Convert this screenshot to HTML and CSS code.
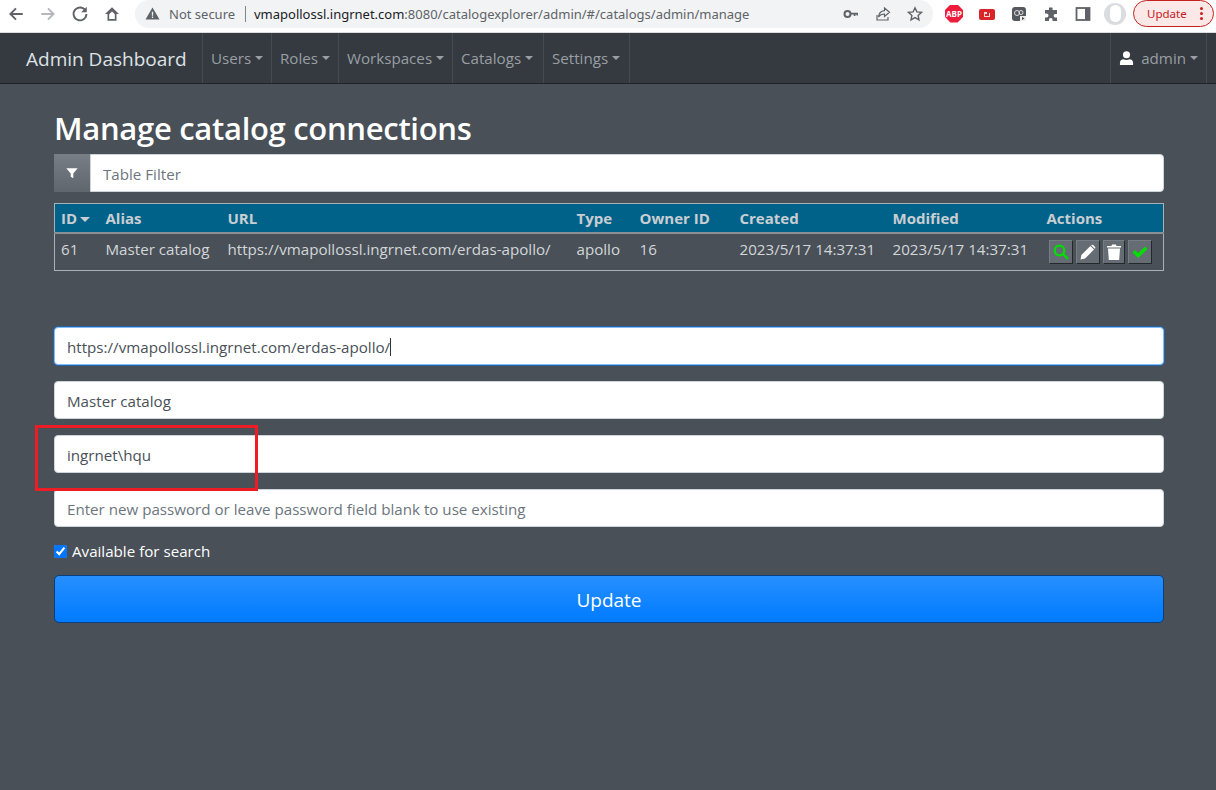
FILE: index.html
```html
<!DOCTYPE html>
<html lang="en">
<head>
<meta charset="utf-8">
<title>Manage catalog connections</title>
<link rel="stylesheet" href="styles.css">
</head>
<body>
<header class="chrome">
  <div class="chrome-nav">
    <svg class="ci" viewBox="0 0 16 16"><path d="M14 8H3M8 3L3 8l5 5" fill="none" stroke="#5f6368" stroke-width="1.7"/></svg>
    <svg class="ci" viewBox="0 0 16 16"><path d="M2 8h11M8 3l5 5-5 5" fill="none" stroke="#b4b7bb" stroke-width="1.7"/></svg>
    <svg class="ci" viewBox="0 0 16 16"><path d="M13 5.2A5.7 5.7 0 1 0 13.7 8" fill="none" stroke="#5f6368" stroke-width="1.7"/><path d="M14 1.5v5h-5z" fill="#5f6368"/></svg>
    <svg class="ci" viewBox="0 0 16 16"><path d="M8 2L1.8 8H4v6h8V8h2.2zM5.5 8.2L8 5.8l2.5 2.4v4.3h-5z" fill="#5f6368" fill-rule="evenodd"/></svg>
  </div>
  <div class="omnibox">
    <svg class="warn" viewBox="0 0 16 16"><path d="M8 1.5L15.5 14.500H.5z" fill="#5f6368"/><path d="M7.300 6h1.400v4.500H7.300zM7.300 11.300h1.400v1.400H7.300z" fill="#f1f3f4"/></svg>
    <span class="notsecure">Not secure</span>
    <span class="omni-sep"></span>
    <span class="url"><b>vmapollossl.ingrnet.com</b>:8080/catalogexplorer/admin/#/catalogs/admin/manage</span>
    <span class="omni-icons">
      <svg class="oi" viewBox="0 0 16 16"><circle cx="4.500" cy="8" r="3" fill="none" stroke="#5f6368" stroke-width="2"/><path d="M7.500 6.800H15v2.600h-1.500V8.600h-1v1.500h-1.800V8.600H7.500z" fill="#5f6368"/></svg>
      <svg class="oi" viewBox="0 0 16 16"><path d="M2 9v5h11v-3" fill="none" stroke="#5f6368" stroke-width="1.200"/><path d="M9.500 2l5 4.200-5 4.200V8C6.500 8 4.800 9 3.500 11c.3-3.500 2.500-6 6-6.400z" fill="none" stroke="#5f6368" stroke-width="1.200"/></svg>
      <svg class="oi" viewBox="0 0 16 16"><path d="M8 1.800l1.900 4.100 4.500.5-3.300 3 .9 4.400L8 11.600l-4 2.200.9-4.400-3.300-3 4.500-.5z" fill="none" stroke="#5f6368" stroke-width="1.400"/></svg>
    </span>
  </div>
  <div class="ext">
    <span class="abp">ABP</span>
    <svg class="ei" viewBox="0 0 16 16"><rect x="0" y="3" width="16" height="11" rx="2" fill="#d9252a"/><path d="M5 6h3v2H6v2h4V7h1v4H5z" fill="#f6d5d5"/></svg>
    <svg class="ei" viewBox="0 0 16 16"><rect x="1" y="1" width="14" height="14" rx="3" fill="#55585c"/><circle cx="6" cy="7" r="2.500" fill="none" stroke="#ddd"/><circle cx="10" cy="6.500" r="2" fill="none" stroke="#ddd"/><rect x="9" y="10" width="6" height="5" fill="#eee"/><path d="M11 11l2.500 1.500L11 14z" fill="#444"/></svg>
    <svg class="ei" viewBox="0 0 16 16"><path d="M6 1.500h3.500V4H14v4h-2.200a1.900 1.900 0 0 0 0 3.500H14V15H9.500v-1.800a1.900 1.900 0 0 0-3.500 0V15H2v-3.500h1.500a2 2 0 0 0 0-4H2V4h4z" fill="#5f6368"/></svg>
    <svg class="ei" viewBox="0 0 16 16"><rect x="1.500" y="2" width="13" height="12" fill="none" stroke="#5f6368" stroke-width="1.800"/><rect x="10" y="2" width="5" height="12" fill="#5f6368"/></svg>
    <span class="avatar"><span class="avatar-in"></span></span>
    <span class="update-pill">Update<span class="dots"><i></i><i></i><i></i></span></span>
  </div>
</header>

<nav class="topnav">
  <a class="brand">Admin Dashboard</a>
  <ul class="menu">
    <li class="caret">Users</li>
    <li class="caret">Roles</li>
    <li class="caret">Workspaces</li>
    <li class="caret">Catalogs</li>
    <li class="caret">Settings</li>
  </ul>
  <div class="usermenu caret">
    <svg class="user" viewBox="0 0 16 16"><circle cx="8" cy="4" r="3.800" fill="#fff"/><path d="M1 15v-2.500C1 10 3 8.800 4.800 8.800c1 .5 2 .8 3.200.8s2.200-.3 3.200-.8c1.800 0 3.800 1.200 3.800 3.700V15z" fill="#fff"/></svg>
    admin
  </div>
</nav>

<main class="content">
  <h1 class="title">Manage catalog connections</h1>
  <div class="filter">
    <span class="filter-addon"><svg viewBox="0 0 16 16"><path d="M1.500 2.500h13L9.500 8.500V14l-3-1.800V8.500z" fill="#fff"/></svg></span>
    <input class="field filter-input" placeholder="Table Filter">
  </div>
  <table class="grid">
    <colgroup>
      <col class="c-id"><col class="c-alias"><col class="c-url"><col class="c-type"><col class="c-owner"><col class="c-created"><col class="c-mod"><col class="c-act">
    </colgroup>
    <thead>
      <tr><th><span class="sort">ID</span></th><th>Alias</th><th>URL</th><th>Type</th><th>Owner ID</th><th>Created</th><th>Modified</th><th>Actions</th></tr>
    </thead>
    <tbody>
      <tr>
        <td>61</td><td>Master catalog</td><td>https://vmapollossl.ingrnet.com/erdas-apollo/</td><td>apollo</td><td>16</td><td>2023/5/17 14:37:31</td><td>2023/5/17 14:37:31</td>
        <td class="acts">
          <button class="act"><svg viewBox="0 0 16 16"><circle cx="6.500" cy="6.500" r="4.800" fill="none" stroke="#00e000" stroke-width="2.200"/><path d="M10 10l5 5" stroke="#00e000" stroke-width="2.400"/></svg></button>
          <button class="act"><svg viewBox="0 0 16 16"><path d="M.5 15.500l.9-4.600L10.400 2l3.600 3.600-9 9zM11.400 1.100a1.300 1.300 0 0 1 1.800 0l1.700 1.700a1.300 1.300 0 0 1 0 1.800l-.2.200-3.600-3.500z" fill="#fff"/></svg></button>
          <button class="act act-narrow"><svg viewBox="0 0 16 16"><path d="M1 2h4.500L6 .5h4L10.500 2H15v1.500H1zM2 4.500h12l-.8 11.500H2.800z" fill="#fff"/></svg></button>
          <button class="act"><svg viewBox="0 0 16 16"><path d="M.5 8.500l2.500-2.500 3.200 3.200L13 2.500l2.500 2.500-9.300 9z" fill="#00e000"/></svg></button>
        </td>
      </tr>
    </tbody>
  </table>

  <form class="form">
    <div class="caret-wrap">
      <input class="field focused" value="https://vmapollossl.ingrnet.com/erdas-apollo/">
      <span class="text-cursor"></span>
    </div>
    <input class="field" value="Master catalog">
    <input class="field" value="ingrnet\hqu">
    <input class="field" placeholder="Enter new password or leave password field blank to use existing">
    <label class="check"><input type="checkbox" checked>Available for search</label>
    <button type="button" class="submit">Update</button>
  </form>
  <div class="highlight"></div>
</main>
</body>
</html>
```
FILE: styles.css
```css
* { box-sizing: border-box; }
html, body { margin: 0; height: 100%; overflow: hidden; }
body {
  width: 1216px;
  height: 790px;
  background: #495057;
  font-family: "Open Sans", "Noto Sans", sans-serif;
  font-size: 15.15px;
  color: #ced4da;
  display: flex;
  flex-direction: column;
}

/* Browser chrome */
.chrome {
  height: 33px;
  padding-bottom: 5px;
  background: #fff;
  display: flex;
  align-items: center;
  border-bottom: 1px solid #dadce0;
  flex: none;
  font-family: "Noto Sans", sans-serif;
}
.chrome-nav { display: flex; gap: 14px; padding-left: 7px; width: 135px; }
.ci { width: 18px; height: 18px; }
.omnibox {
  width: 798px;
  height: 28px;
  background: #f1f3f4;
  border-radius: 14px;
  display: flex;
  align-items: center;
  padding-left: 10px;
  font-size: 13px;
  color: #5f6368;
  white-space: nowrap;
}
.warn { width: 15px; height: 15px; margin-right: 9px; }
.notsecure { width: 76px; }
.omni-sep { width: 1px; height: 16px; background: #80868b; margin-right: 8px; }
.url { font-size: 13px; width: 580px; overflow: hidden; }
.url b { font-weight: 400; color: #202124; }
.omni-icons { display: flex; gap: 16px; margin-left: auto; padding-right: 10px; }
.oi { width: 16px; height: 16px; }
.ext { display: flex; align-items: center; margin-left: 12px; }
.abp {
  width: 18px; height: 18px; background: #ee1c3c; color: #fff;
  clip-path: polygon(30% 0, 70% 0, 100% 30%, 100% 70%, 70% 100%, 30% 100%, 0 70%, 0 30%);
  font-size: 8px; font-weight: 700; display: flex; align-items: center; justify-content: center;
  margin-right: 16px;
}
.ei { width: 16px; height: 16px; margin-right: 16px; }
.avatar {
  width: 22px; height: 22px; border-radius: 50%; background: #dadce0;
  display: flex; align-items: center; justify-content: center; margin-left: -3px; margin-right: 7px;
}
.avatar-in { width: 11px; height: 17px; border-radius: 6px; background: #fff; }
.update-pill {
  width: 81px; height: 27px; border: 1px solid #c5221f; border-radius: 14px; background: #fce8e6;
  color: #c5221f; font-size: 11.5px; display: flex; align-items: center; padding: 0 10px 0 13px;
  justify-content: space-between;
}
.dots { display: flex; flex-direction: column; gap: 2px; }
.dots i { display: block; width: 3px; height: 3px; border-radius: 50%; background: #c5221f; }

/* Top nav */
.topnav {
  height: 51px;
  flex: none;
  background: #343a40;
  border-bottom: 1px solid #1f2327;
  display: flex;
  align-items: center;
  padding-left: 26px;
  padding-right: 9px;
}
.brand { font-size: 19px; color: #dee2e6; width: 176px; padding-top: 1px; }
.menu {
  list-style: none; margin: 0; padding: 0; display: grid; height: 50px;
  grid-template-columns: 69px 67px 114px 91px 86px;
  border-right: 1px solid #454b52;
}
.menu li {
  padding-left: 8px;
  display: flex;
  align-items: center;
  color: #9a9fa4;
  border-left: 1px solid #454b52;
}
.caret::after {
  content: "";
  display: inline-block;
  margin-left: 4px;
  border-top: 4px solid currentColor;
  border-left: 4px solid transparent;
  border-right: 4px solid transparent;
}
.usermenu {
  margin-left: auto;
  height: 50px;
  display: flex;
  align-items: center;
  padding: 0 8px;
  color: #9a9fa4;
  border-left: 1px solid #454b52;
  border-right: 1px solid #454b52;
}
.user { width: 15px; height: 15px; margin-right: 7px; }

/* Content */
.content {
  position: relative;
  flex: 1;
  padding: 25px 52px 0 54px;
}
.title {
  margin: 0 0 7px; font-size: 31px; line-height: 38px; font-weight: 600; color: #fff;
  letter-spacing: -.3px;
}
.filter { display: flex; height: 38px; margin-bottom: 11px; }
.filter-addon {
  width: 36px; background: linear-gradient(#777e85, #5f666d);
  display: flex; align-items: center; justify-content: center; flex: none;
}
.filter-addon svg { width: 14px; height: 14px; }
.field {
  display: block;
  width: 100%;
  height: 38px;
  border: 1px solid #ced4da;
  border-radius: 4px;
  padding: 2px 12px 0;
  font: inherit;
  color: #495057;
  background: #fff;
  outline: none;
}
.field::placeholder { color: #6c757d; opacity: 1; }
.filter-input { border-radius: 0 4px 4px 0; }
.focused { border-color: #80bdff; box-shadow: 0 0 0 1px rgba(0, 123, 255, .45); }
.caret-wrap { position: relative; }
.text-cursor {
  position: absolute;
  left: 336px;
  top: 11px;
  width: 1px;
  height: 18px;
  background: #333;
}

.grid {
  width: 100%;
  table-layout: fixed;
  border-collapse: collapse;
  border: 1px solid #aab0b5;
}
.c-id { width: 45px; }
.c-alias { width: 122px; }
.c-url { width: 349px; }
.c-type { width: 63px; }
.c-owner { width: 100px; }
.c-created { width: 153px; }
.c-mod { width: 154px; }
.grid th {
  background: #006289;
  color: #c9ced3;
  height: 29px;
  padding: 0 6px;
  text-align: left;
  font-weight: 700;
  font-size: 15px;
  border-bottom: 2px solid #8a9096;
  white-space: nowrap;
}
.grid td { height: 38px; padding: 0 6px 6px; white-space: nowrap; color: #d3d7da; }
.sort::after {
  content: "";
  display: inline-block;
  margin-left: 3px;
  vertical-align: 2px;
  border-top: 5px solid currentColor;
  border-left: 5px solid transparent;
  border-right: 5px solid transparent;
}
.grid .acts { padding: 0 0 0 8px; }
.acts { font-size: 0; }
.act {
  width: 24px;
  height: 24px;
  margin-right: 3px;
  padding: 3px;
  border: 1px solid;
  border-color: #777d84 #24282b #24282b #777d84;
  background: #656c73;
  display: inline-flex;
  align-items: center;
  justify-content: center;
  vertical-align: middle;
}
.act-narrow { width: 22px; }
.act svg { width: 16px; height: 16px; flex: none; }

.form { margin-top: 56px; display: flex; flex-direction: column; gap: 16px; }
.check {
  display: flex; align-items: center; color: #fff; height: 20px; margin-top: -2px; margin-bottom: -2px;
}
.check input { width: 13px; height: 13px; margin: 0 5px 0 0; accent-color: #0075ff; }
.submit {
  height: 48px;
  padding-top: 2px;
  border: 1px solid #0a3f7d;
  border-radius: 5px;
  background: linear-gradient(#268fff, #007bff);
  color: #fff;
  font: inherit;
  font-size: 19px;
}
.highlight {
  position: absolute;
  left: 35px;
  top: 341px;
  width: 223px;
  height: 66px;
  border: 3px solid #ee1c25;
  pointer-events: none;
}
```
